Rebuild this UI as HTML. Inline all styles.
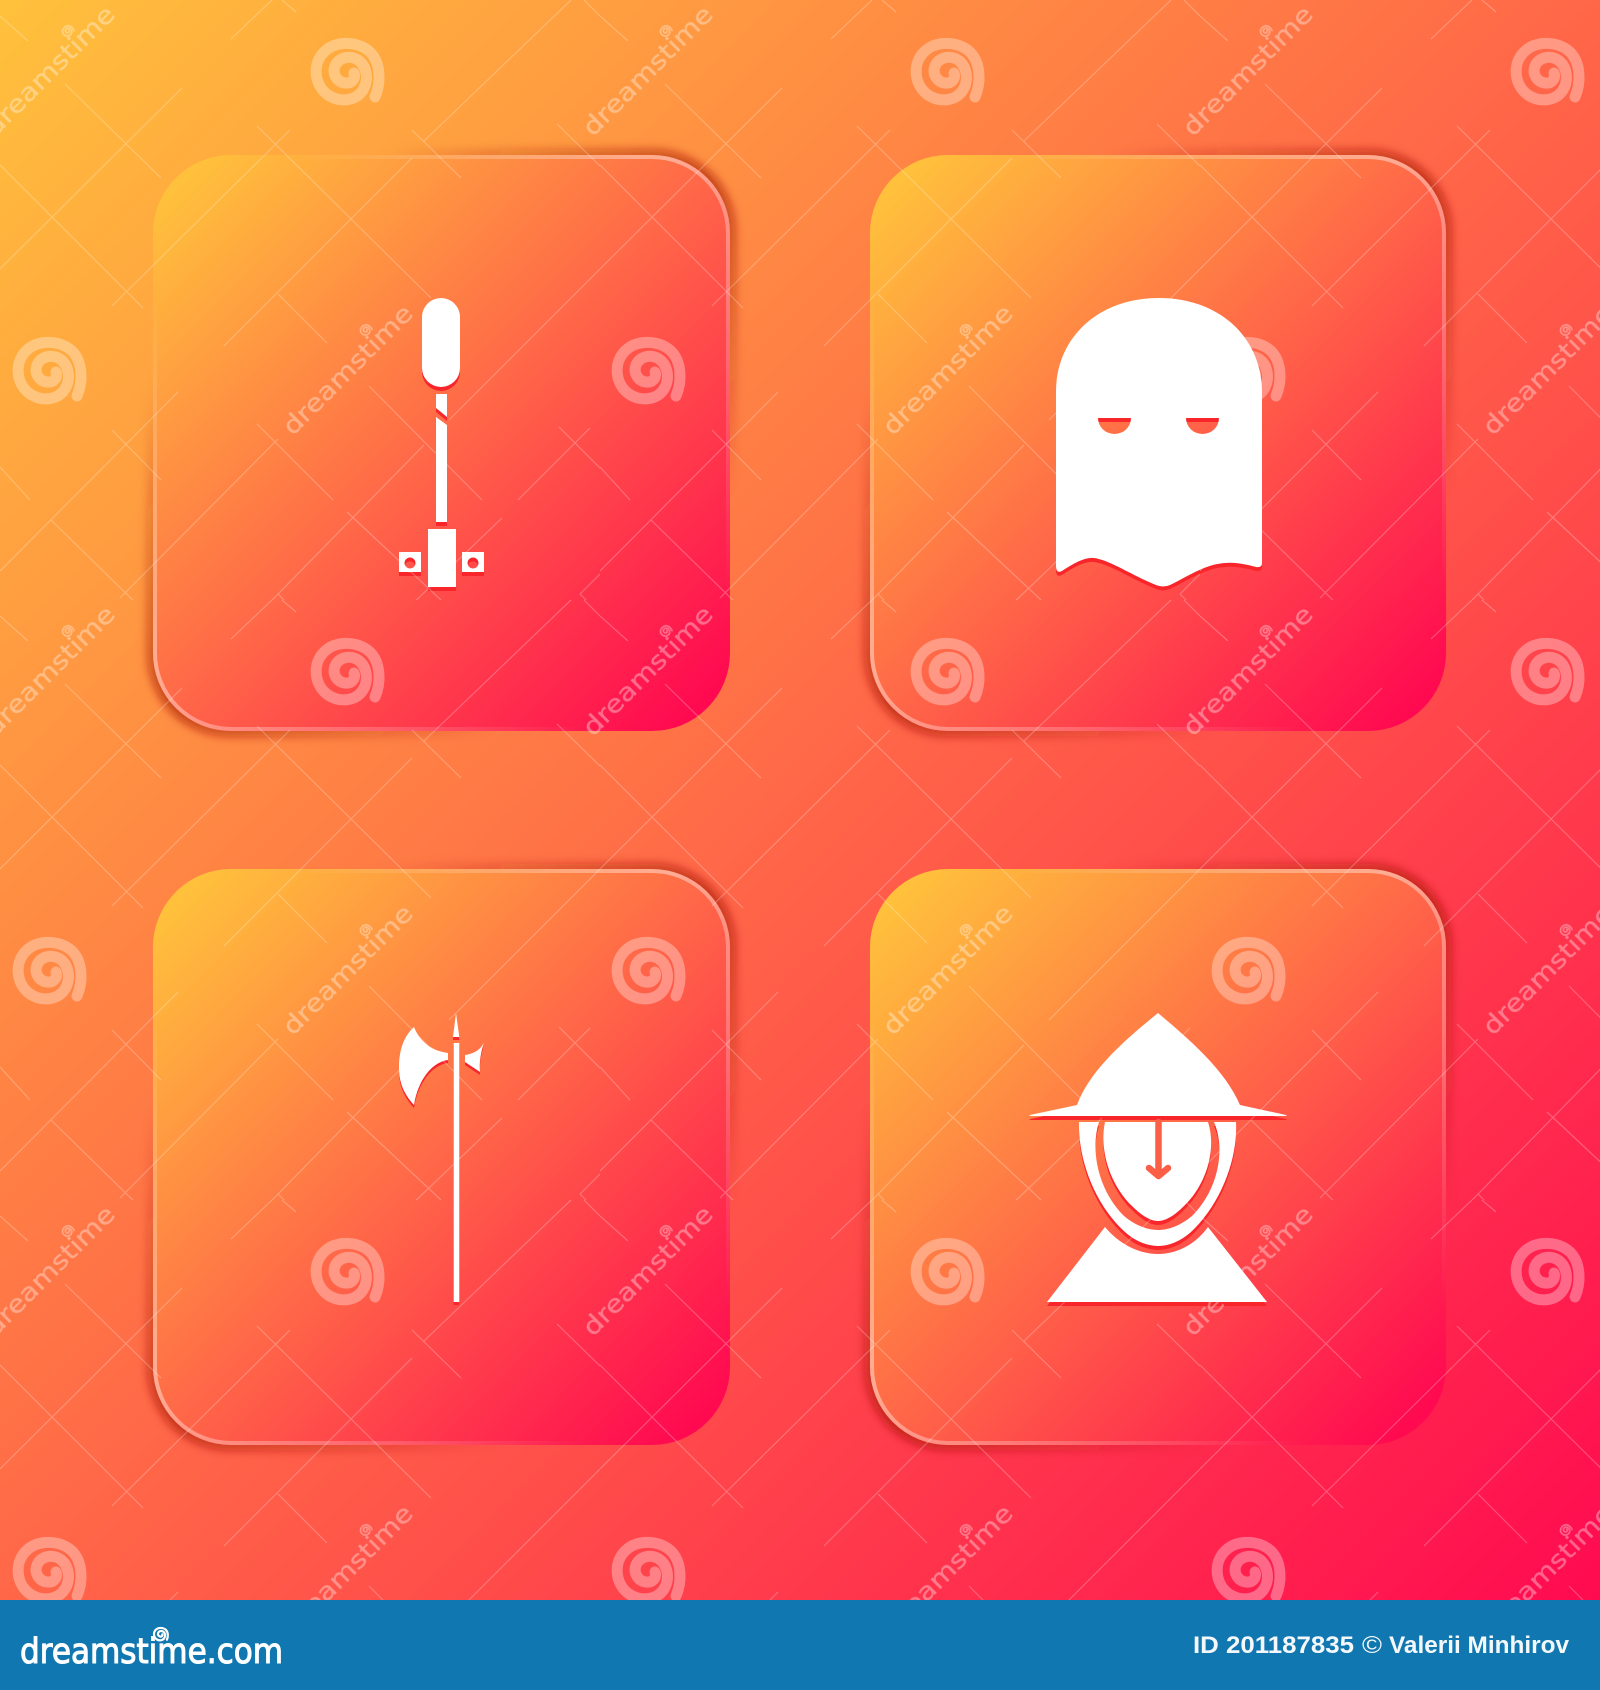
<!DOCTYPE html>
<html lang="en">
<head>
<meta charset="utf-8">
<title>dreamstime</title>
<style>
html,body{margin:0;padding:0;width:1600px;height:1690px;overflow:hidden;background:#ff6546}
svg{display:block}
.ic{filter:drop-shadow(0 4px 0 #f8262a)}
.wm text{font-family:"DejaVu Sans","Liberation Sans",sans-serif;font-size:25px;fill:#fff;stroke:#fff;stroke-width:.3}
.big use{stroke-width:11}
</style>
</head>
<body>
<svg xmlns="http://www.w3.org/2000/svg" width="1600" height="1690" viewBox="0 0 1600 1690">
<defs>
<linearGradient id="pg" gradientUnits="userSpaceOnUse" x1="0" y1="0" x2="1600" y2="1600">
<stop offset="0" stop-color="#ffc13c"/><stop offset=".5" stop-color="#ff6748"/><stop offset="1" stop-color="#ff0a50"/>
</linearGradient>
<linearGradient id="cg" x1="0" y1="0" x2="1" y2="1">
<stop offset=".05" stop-color="#ffc03c"/><stop offset=".5" stop-color="#ff6748"/><stop offset=".95" stop-color="#ff0a50"/>
</linearGradient>
<linearGradient id="bd" x1="0" y1="0" x2="1" y2="1">
<stop offset=".12" stop-color="#fff" stop-opacity="0"/><stop offset=".45" stop-color="#fff" stop-opacity=".42"/><stop offset=".88" stop-color="#fff" stop-opacity="0"/>
</linearGradient>
<linearGradient id="sh" x1="0" y1="0" x2="1" y2="1">
<stop offset=".2" stop-color="#a51500" stop-opacity="0"/><stop offset=".5" stop-color="#a51500" stop-opacity=".8"/><stop offset=".8" stop-color="#a51500" stop-opacity="0"/>
</linearGradient>
<filter id="bl" x="-10%" y="-10%" width="120%" height="120%"><feGaussianBlur stdDeviation="5"/></filter>
<pattern id="ln" patternUnits="userSpaceOnUse" width="600" height="600">
<path fill="none" stroke="#fff" stroke-opacity=".25" stroke-width="1.2" d="M0 269L182 88M231 39L272 0M0 571L178 392M112 306L290 130M224 346L412 158M424 141L571 0M120 598L278 439M449 420L600 269M518 500L590 428M233 640L424 445M408 608L502 518M580 594L600 574M0 16L28 41M65 84L161 178M0 165L143 308M112 430L161 480M0 467L30 500M51 520L143 610M282 0L296 12M257 126L431 298M412 130L461 178M557 124L600 166M584 0L600 16M278 294L327 343M369 386L482 500M257 424L333 500M559 427L600 468M347 512L441 600M278 594L284 600M580 594L586 600"/>
</pattern>
<path id="sp" fill="none" stroke="#fff" stroke-linecap="round" stroke-linejoin="round" d="M27 26C33 12 33-8 22-19C10-30-12-31-24-19C-36-7-34 14-20 24C-8 32 8 30 15 19C21 9 19-5 10-11C2-16-9-14-13-5C-16 3-11 11-3 12C4 13 8 7 6 2"/>
</defs>

<rect width="1600" height="1600" fill="url(#pg)"/>

<g fill="none" stroke="url(#sh)" stroke-width="10" filter="url(#bl)">
<rect x="153" y="155" width="577" height="576" rx="78"/>
<rect x="870" y="155" width="576" height="576" rx="78"/>
<rect x="153" y="869" width="577" height="576" rx="78"/>
<rect x="870" y="869" width="576" height="576" rx="78"/>
</g>
<g fill="url(#cg)">
<rect x="153" y="155" width="577" height="576" rx="78"/>
<rect x="870" y="155" width="576" height="576" rx="78"/>
<rect x="153" y="869" width="577" height="576" rx="78"/>
<rect x="870" y="869" width="576" height="576" rx="78"/>
</g>
<g fill="none" stroke="url(#bd)" stroke-width="4">
<rect x="155" y="157" width="573" height="572" rx="76"/>
<rect x="872" y="157" width="572" height="572" rx="76"/>
<rect x="155" y="871" width="573" height="572" rx="76"/>
<rect x="872" y="871" width="572" height="572" rx="76"/>
</g>

<!-- mace -->
<g class="ic" fill="#fff">
<rect x="422" y="298" width="38" height="89" rx="19"/>
<path d="M436 394H447V417L436 408Z"/>
<path d="M436 417L447 425V522H436Z"/>
<rect x="428" y="529" width="28" height="58"/>
<path fill-rule="evenodd" d="M399 552H421V572H399ZM410 557.500a5.500 5.500 0 1 0 .01 0Z"/>
<path fill-rule="evenodd" d="M462 552H484V572H462ZM473 557.500a5.500 5.500 0 1 0 .01 0Z"/>
</g>

<!-- hood -->
<g class="ic" fill="#fff">
<path fill-rule="evenodd" d="M1056 392C1056 338 1098 298 1159 298C1220 298 1262 338 1262 392L1262 563Q1262 568 1256 567C1245 564 1235 562 1225 563C1205 564 1185 578 1170 585Q1163 588 1156 585C1135 577 1110 560 1094 558C1083 557 1070 566 1062 571Q1056 574 1056 566ZM1098 418H1131A16.500 16 0 0 1 1098 418ZM1186 418H1219A16.500 16 0 0 1 1186 418Z"/>
</g>

<!-- axe -->
<g class="ic" fill="#fff" style="filter:drop-shadow(0 3px 0 #f8262a)">
<path d="M456 1013L459.300 1037H453Z"/>
<rect x="453.700" y="1043" width="5.600" height="259"/>
<path d="M414 1027C420 1042 432 1051 448 1053L448 1060C432 1062 418 1080 414 1105C402 1092 399 1080 399 1067C399 1050 404 1036 414 1027Z"/>
<path d="M465 1055C473 1054 481 1050 484 1042C481 1052 479 1062 480 1072L465 1062Z"/>
</g>

<!-- soldier -->
<g class="ic" fill="#fff">
<path d="M1047 1302L1105 1227C1120 1245 1140 1254 1158 1254C1176 1254 1195 1245 1208 1227L1267 1302Z"/>
</g>
<g class="ic" fill="#fff">
<path d="M1158 1013C1125 1040 1090 1070 1077 1105L1030 1115Q1028 1116 1032 1116H1284Q1288 1116 1286 1115L1240 1105C1225 1070 1190 1040 1158 1013Z"/>
<path fill-rule="evenodd" d="M1079 1122C1078 1160 1095 1205 1125 1232C1135 1241 1147 1246 1158 1246C1169 1246 1181 1241 1191 1232C1220 1205 1238 1160 1236 1122H1214C1226 1150 1218 1190 1192 1216C1180 1226 1168 1230 1158 1230C1148 1230 1136 1226 1124 1216C1098 1190 1090 1150 1099 1122Z"/>
<path d="M1105 1122C1099 1150 1110 1185 1132 1206C1141 1215 1150 1221 1158 1221C1166 1221 1175 1215 1184 1206C1206 1185 1217 1150 1208 1122Z"/>
</g>
<path d="M1158.500 1122V1176M1149 1168L1158.500 1176L1168 1168" fill="none" stroke="#fb5f45" stroke-width="6.500" stroke-linecap="round" stroke-linejoin="round"/>

<!-- watermark lines -->
<rect width="1600" height="1600" fill="url(#ln)"/>

<!-- watermark spirals -->
<g opacity=".33" class="big">
<use href="#sp" x="348" y="71"/><use href="#sp" x="948" y="71"/><use href="#sp" x="1548" y="71"/>
<use href="#sp" x="50" y="370"/><use href="#sp" x="649" y="370"/><use href="#sp" x="1249" y="370"/>
<use href="#sp" x="348" y="671"/><use href="#sp" x="948" y="671"/><use href="#sp" x="1548" y="671"/>
<use href="#sp" x="50" y="970"/><use href="#sp" x="649" y="970"/><use href="#sp" x="1249" y="970"/>
<use href="#sp" x="348" y="1271"/><use href="#sp" x="948" y="1271"/><use href="#sp" x="1548" y="1271"/>
<use href="#sp" x="50" y="1570"/><use href="#sp" x="649" y="1570"/><use href="#sp" x="1249" y="1570"/>
</g>

<!-- watermark text -->
<g class="wm" opacity=".36">
<g transform="translate(50 71) rotate(-45)"><text x="-86" y="8" textLength="172" lengthAdjust="spacingAndGlyphs">dreamstime</text><use href="#sp" transform="translate(41 -16) scale(.17)" style="stroke-width:10"/></g>
<g transform="translate(648 71) rotate(-45)"><text x="-86" y="8" textLength="172" lengthAdjust="spacingAndGlyphs">dreamstime</text><use href="#sp" transform="translate(41 -16) scale(.17)" style="stroke-width:10"/></g>
<g transform="translate(1248 71) rotate(-45)"><text x="-86" y="8" textLength="172" lengthAdjust="spacingAndGlyphs">dreamstime</text><use href="#sp" transform="translate(41 -16) scale(.17)" style="stroke-width:10"/></g>
<g transform="translate(348 370) rotate(-45)"><text x="-86" y="8" textLength="172" lengthAdjust="spacingAndGlyphs">dreamstime</text><use href="#sp" transform="translate(41 -16) scale(.17)" style="stroke-width:10"/></g>
<g transform="translate(948 370) rotate(-45)"><text x="-86" y="8" textLength="172" lengthAdjust="spacingAndGlyphs">dreamstime</text><use href="#sp" transform="translate(41 -16) scale(.17)" style="stroke-width:10"/></g>
<g transform="translate(1548 370) rotate(-45)"><text x="-86" y="8" textLength="172" lengthAdjust="spacingAndGlyphs">dreamstime</text><use href="#sp" transform="translate(41 -16) scale(.17)" style="stroke-width:10"/></g>
<g transform="translate(50 671) rotate(-45)"><text x="-86" y="8" textLength="172" lengthAdjust="spacingAndGlyphs">dreamstime</text><use href="#sp" transform="translate(41 -16) scale(.17)" style="stroke-width:10"/></g>
<g transform="translate(648 671) rotate(-45)"><text x="-86" y="8" textLength="172" lengthAdjust="spacingAndGlyphs">dreamstime</text><use href="#sp" transform="translate(41 -16) scale(.17)" style="stroke-width:10"/></g>
<g transform="translate(1248 671) rotate(-45)"><text x="-86" y="8" textLength="172" lengthAdjust="spacingAndGlyphs">dreamstime</text><use href="#sp" transform="translate(41 -16) scale(.17)" style="stroke-width:10"/></g>
<g transform="translate(348 970) rotate(-45)"><text x="-86" y="8" textLength="172" lengthAdjust="spacingAndGlyphs">dreamstime</text><use href="#sp" transform="translate(41 -16) scale(.17)" style="stroke-width:10"/></g>
<g transform="translate(948 970) rotate(-45)"><text x="-86" y="8" textLength="172" lengthAdjust="spacingAndGlyphs">dreamstime</text><use href="#sp" transform="translate(41 -16) scale(.17)" style="stroke-width:10"/></g>
<g transform="translate(1548 970) rotate(-45)"><text x="-86" y="8" textLength="172" lengthAdjust="spacingAndGlyphs">dreamstime</text><use href="#sp" transform="translate(41 -16) scale(.17)" style="stroke-width:10"/></g>
<g transform="translate(50 1271) rotate(-45)"><text x="-86" y="8" textLength="172" lengthAdjust="spacingAndGlyphs">dreamstime</text><use href="#sp" transform="translate(41 -16) scale(.17)" style="stroke-width:10"/></g>
<g transform="translate(648 1271) rotate(-45)"><text x="-86" y="8" textLength="172" lengthAdjust="spacingAndGlyphs">dreamstime</text><use href="#sp" transform="translate(41 -16) scale(.17)" style="stroke-width:10"/></g>
<g transform="translate(1248 1271) rotate(-45)"><text x="-86" y="8" textLength="172" lengthAdjust="spacingAndGlyphs">dreamstime</text><use href="#sp" transform="translate(41 -16) scale(.17)" style="stroke-width:10"/></g>
<g transform="translate(348 1570) rotate(-45)"><text x="-86" y="8" textLength="172" lengthAdjust="spacingAndGlyphs">dreamstime</text><use href="#sp" transform="translate(41 -16) scale(.17)" style="stroke-width:10"/></g>
<g transform="translate(948 1570) rotate(-45)"><text x="-86" y="8" textLength="172" lengthAdjust="spacingAndGlyphs">dreamstime</text><use href="#sp" transform="translate(41 -16) scale(.17)" style="stroke-width:10"/></g>
<g transform="translate(1548 1570) rotate(-45)"><text x="-86" y="8" textLength="172" lengthAdjust="spacingAndGlyphs">dreamstime</text><use href="#sp" transform="translate(41 -16) scale(.17)" style="stroke-width:10"/></g>
</g>

<!-- bottom bar -->
<rect y="1600" width="1600" height="90" fill="#1077b0"/>
<text x="20" y="1663" font-family="'DejaVu Sans','Liberation Sans',sans-serif" font-size="35" fill="#fff" stroke="#fff" stroke-width="1.1" textLength="263" lengthAdjust="spacingAndGlyphs">dreamstime.com</text>
<use href="#sp" transform="translate(161 1634) scale(.22)" style="stroke-width:10"/>
<g font-family="'Liberation Sans',sans-serif" font-size="24" font-weight="700" fill="#f4f8fb">
<text x="1193" y="1653" textLength="161" lengthAdjust="spacingAndGlyphs">ID 201187835</text>
<text x="1362" y="1653" font-weight="400" textLength="20" lengthAdjust="spacingAndGlyphs">©</text>
<text x="1389" y="1653" textLength="180" lengthAdjust="spacingAndGlyphs">Valerii Minhirov</text>
</g>
</svg>
</body>
</html>
